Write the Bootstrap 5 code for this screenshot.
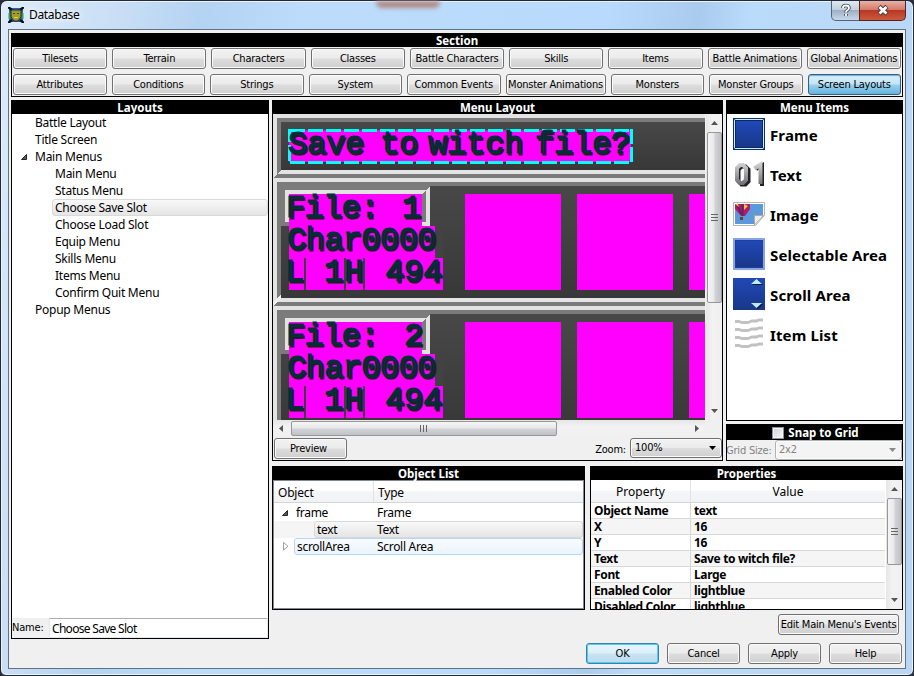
<!DOCTYPE html>
<html lang="en">
<head>
<meta charset="utf-8">
<title>Database</title>
<link href="https://cdn.jsdelivr.net/npm/bootstrap@5.3.0/dist/css/bootstrap.min.css" rel="stylesheet">
<style>
*{box-sizing:border-box}
body{margin:0;width:914px;height:676px;overflow:hidden;background:#2a2c38;font-family:"DejaVu Sans Condensed","DejaVu Sans",sans-serif;font-stretch:condensed;font-size:11px;line-height:14px;color:#000;letter-spacing:-.2px}
.win{width:914px;height:676px;border:1px solid #23283a;border-radius:7px 7px 6px 6px;padding:0 7px 7px;background:linear-gradient(100deg,#dcebf9 0,#c9def5 120px,#b4d3f2 200px,#bddcfb 300px,#b9dafc 600px,#a9cbed 690px,#bbdbfb 740px,#b9d6f2 100%);box-shadow:inset 0 0 0 1px #e9f4fd}
.titlebar{height:28px;font-family:"Noto Sans",sans-serif;font-size:12px}
.titlebar .cap{margin-left:5px;letter-spacing:-.35px;text-shadow:0 0 5px #fff,0 0 8px #fff;padding-top:3px;margin-top:4px}
.smudge{width:64px;height:7px;background:#b18c86;filter:blur(2px);border-radius:0 0 6px 6px;margin-left:297px}
.appicon{margin-top:6px}
.ctl{height:20px;border:1px solid #56647a;border-top:0}
.ctl.q{width:29px;border-radius:0 0 0 5px;background:linear-gradient(#e0e9f2,#c3cfdd 45%,#9fb0c5 50%,#c8d8e8)}
.ctl.x{width:47px;margin-left:-1px;border-color:#5c2022;border-radius:0 0 5px 0;background:linear-gradient(#e8b1a4,#d47c6b 45%,#b93823 50%,#cb5a3d)}
.client{height:640px;background:#f0f0f0;border:1px solid #5f7385;padding:3px 2px 0}
.panel{border:1px solid #000;background:#f0f0f0;overflow:hidden}
.ph{background:#000;color:#fff;font-weight:bold;text-align:center;height:14px;line-height:16px;margin:-1px -1px 0;font-family:"Noto Sans",sans-serif;font-size:11.5px;letter-spacing:0;flex:none}
.wbtn{height:21px;border:1px solid #707070;border-radius:3px;box-shadow:inset 0 0 0 1px #fbfbfb;background:linear-gradient(#f2f2f2,#ebebeb 48%,#dddddd 52%,#cfcfcf);font-size:11px;line-height:20px;padding:0;color:#000;text-align:center;white-space:nowrap;letter-spacing:-.22px}
.wbtn.sel{border-color:#2c628b;background:linear-gradient(#d8eefa,#c4e5f6 48%,#98d1ef 52%,#68b3db);box-shadow:inset 0 1px 1px #7fa9c0}
.wbtn.def{border-color:#3c7fb1;box-shadow:inset 0 0 0 1px #48d0f6;background:linear-gradient(#eaf5fb,#dceff9 48%,#c8e3f2 52%,#bcdcee)}
.sect{height:64px;padding:0 1px}
.sect .ph{margin:-1px -2px 1px}
.w100p{flex:0 0 100px}
.tree{font-family:"Noto Sans",sans-serif;font-size:12px;letter-spacing:-.25px}
.tree .it{height:17px;line-height:18px;padding-left:23px;white-space:nowrap}
.tree .it.top{padding-left:8px}
.tree .it.top span{padding-left:7px}
.tree .it.sub{margin-left:40px;padding-left:3px}
.picked{border:1px solid #d9d9d9;border-radius:3px;background:linear-gradient(#f8f8f8,#e5e5e5)}
.tree .it.sub.picked{padding-left:2px;line-height:16px}
.arrow{width:8px;height:8px;display:block}
.c-left{width:258px;height:539px}
.c-mid{width:451px;height:361px}
.c-right{width:177px}
.namebox{height:20px;border:1px solid #e3e9ef;border-top-color:#abadb3;background:#fff;font-size:12px;line-height:20px;padding-left:2px;margin-left:5px;width:219px;font-family:"Noto Sans",sans-serif;letter-spacing:-.7px}
.vbar{width:16px;background:linear-gradient(90deg,#e6e6e6,#f2f2f2 40%,#f0f0f0)}
.vth{border:1px solid #979797;border-radius:2px;background:linear-gradient(90deg,#f5f5f5,#e9e9eb 45%,#d2d3d6 55%,#c0c1c5);width:15px}
.hbar{height:17px;background:linear-gradient(#e6e6e6,#f2f2f2 40%,#f0f0f0)}
.hth{border:1px solid #979797;border-radius:2px;background:linear-gradient(#f5f5f5,#e9e9eb 45%,#d2d3d6 55%,#c0c1c5);height:15px;width:266px}
.mi{height:40px;font-family:"Noto Sans",sans-serif;font-weight:bold;font-size:15px;line-height:34px;padding-left:6px;white-space:nowrap;letter-spacing:.12px}
.mi svg{margin-right:5px;flex:none}
.combo{border:1px solid #707070;border-radius:3px;box-shadow:inset 0 0 0 1px #fbfbfb;background:linear-gradient(#f2f2f2,#ebebeb 48%,#dddddd 52%,#cfcfcf);height:20px;line-height:18px}
.combo.off{background:#f4f4f4;border-color:#adb2b5;color:#838383}
.chk{width:12px;height:12px;border:1px solid #8e8f8f;background:linear-gradient(135deg,#cfd3d8,#f6f6f6);box-shadow:inset 0 0 0 1px #f4f4f4}
.lower{height:144px}
.hd{background:linear-gradient(#fff 45%,#f5f6f8 50%,#f1f2f4);border-bottom:1px solid #d5d5d5;font-family:"Noto Sans",sans-serif;font-size:12px;letter-spacing:-.2px}
.col1{border-right:1px solid #e0e3e6}
.ol .r{height:17px;line-height:16px;font-family:"Noto Sans",sans-serif;font-size:12px;letter-spacing:-.3px}
.hover{border:1px solid #b8d6fb;border-radius:3px;background:linear-gradient(#fafcff,#eaf3fd)}
.pr{height:16px;border-bottom:1px solid #d8d8d8;font-family:"Noto Sans",sans-serif;font-weight:bold;font-size:12px;line-height:16px;background:#fff;letter-spacing:-.35px;flex:none;white-space:nowrap}
.pr:nth-child(odd){background:#f5f5f5}
.pr div:first-child{width:100px;border-right:1px solid #d8d8d8;padding-left:3px}
.pr div:last-child{padding-left:3px}
.w73{width:73px}
</style>
<script src="https://cdn.jsdelivr.net/npm/bootstrap@5.3.0/dist/js/bootstrap.bundle.min.js"></script>
</head>
<body>
<svg width="0" height="0" class="position-absolute">
<defs>
<linearGradient id="dk" x1="0" y1="0" x2="0" y2="1"><stop offset="0" stop-color="#484848"/><stop offset="1" stop-color="#383838"/></linearGradient>
<linearGradient id="bl" x1="0" y1="0" x2="0" y2="1"><stop offset="0" stop-color="#2148b8"/><stop offset="1" stop-color="#183888"/></linearGradient>
<linearGradient id="sv" gradientUnits="userSpaceOnUse" x1="0" y1="5" x2="0" y2="28"><stop offset="0" stop-color="#d2d2d6"/><stop offset="1" stop-color="#6a6a6c"/></linearGradient>
<symbol id="open" viewBox="0 0 8 8"><path d="M6.500 1.500v5h-5z" fill="#595959" stroke="#262626"/></symbol>
<symbol id="up" viewBox="0 0 7 4"><path d="M3.5 0 7 4H0z" fill="#555"/></symbol>
<symbol id="dn" viewBox="0 0 7 4"><path d="M3.5 4 7 0H0z" fill="#555"/></symbol>
<g id="slot">
<path d="M0 0h440v4H4v116l-4 4z" fill="#e3e3e3"/><path d="M4 4h436v4H8v108l-4 4z" fill="#7b7b7b"/>
<rect x="8" y="8" width="424" height="112" fill="url(#dk)"/>
<path d="M8 120h424v4H4z" fill="#e3e3e3"/><path d="M4 124h428v4H0z" fill="#7b7b7b"/>
<path d="M8 8h149l-8 8H16v24l-8 8z" fill="#7b7b7b"/>
<path d="M12 12h141l-4 4H16v24l-4 4z" fill="#e3e3e3"/>
<path d="M8 48l4-4h4v4z" fill="#7b7b7b"/><path d="M12 44l4-4v4z" fill="#e3e3e3"/>
<path d="M149 16l8-8v40h-8z" fill="#e3e3e3"/><path d="M149 16l4-4v32h-4z" fill="#7b7b7b"/>
<path d="M16 16h133v32h13v32h8v32H16z" fill="#f0f"/>
<path d="M162 48h8v32h-8z" fill="#424242"/>
<path d="M192 16h96v96h-96zM304 16h96v96h-96zM416 16h16v96h-16z" fill="#f0f"/>
<path d="M31 80h2v32h-2zM71 80h2v32h-2zM90 80h2v32h-2z" fill="#3e3e3e"/>
</g>
</defs>
</svg>
<div class="win">
 <div class="titlebar d-flex align-items-start">
  <svg width="16" height="16" viewBox="0 0 16 16" class="appicon"><rect x="1" y="1" width="14" height="14" fill="#1d63c4"/><path d="M0 0l4 3M16 0l-4 3M0 16l4-3M16 16l-4-3" stroke="#111" stroke-width="2.500"/><path d="M1.500 6v6M14.500 6v6" stroke="#2b9b62" stroke-width="2"/><path d="M3 3h10v7l-3 4H6l-3-4z" fill="#a39c2c" stroke="#2c2c14"/><path d="M5 6.500h2M9 6.500h2" stroke="#4c4718"/><path d="M6 10.500h4" stroke="#e8d23a"/></svg>
  <span class="cap">Database</span>
  <div class="smudge"></div>
  <div class="ctl q ms-auto d-flex justify-content-center"><svg width="12" height="18" viewBox="0 0 12 18"><path d="M3 7V6.500q0-2 3-2t3 2.500q0 1.500-2 2.500-1 .5-1 2M6 13v2" fill="none" stroke="#454c58" stroke-width="3.600"/><path d="M3 7V6.500q0-2 3-2t3 2.500q0 1.500-2 2.500-1 .5-1 2M6 13v2" fill="none" stroke="#fff" stroke-width="1.800"/></svg></div>
  <div class="ctl x d-flex justify-content-center"><svg width="14" height="18" viewBox="0 0 14 18"><path d="M3 5.500l8 7.500M11 5.500L3 13" stroke="#50393b" stroke-width="4.600"/><path d="M3.500 6l7 6.500M10.500 6l-7 6.500" stroke="#fff" stroke-width="2.800"/></svg></div>
 </div>
 <div class="client">
  <div class="panel sect">
   <div class="ph">Section</div>
   <div class="d-flex" style="gap:5px">
    <div class="wbtn col">Tilesets</div><div class="wbtn col">Terrain</div><div class="wbtn col">Characters</div><div class="wbtn col">Classes</div><div class="wbtn col">Battle Characters</div><div class="wbtn col">Skills</div><div class="wbtn col">Items</div><div class="wbtn col">Battle Animations</div><div class="wbtn col">Global Animations</div>
   </div>
   <div class="d-flex" style="gap:5px;margin-top:5px">
    <div class="wbtn col">Attributes</div><div class="wbtn col">Conditions</div><div class="wbtn col">Strings</div><div class="wbtn col">System</div><div class="wbtn col">Common Events</div><div class="wbtn w100p">Monster Animations</div><div class="wbtn col">Monsters</div><div class="wbtn col">Monster Groups</div><div class="wbtn col sel">Screen Layouts</div>
   </div>
  </div>
  <div class="d-flex" style="gap:3px;margin-top:3px">
   <div class="panel c-left d-flex flex-column">
    <div class="ph">Layouts</div>
    <div class="tree bg-white flex-grow-1">
     <div class="it">Battle Layout</div><div class="it">Title Screen</div>
     <div class="it top d-flex align-items-center"><svg class="arrow"><use href="#open"/></svg><span>Main Menus</span></div>
     <div class="it sub">Main Menu</div><div class="it sub">Status Menu</div><div class="it sub picked">Choose Save Slot</div><div class="it sub">Choose Load Slot</div><div class="it sub">Equip Menu</div><div class="it sub">Skills Menu</div><div class="it sub">Items Menu</div><div class="it sub">Confirm Quit Menu</div>
     <div class="it">Popup Menus</div>
    </div>
    <div class="d-flex align-items-center"><span style="width:32px">Name:</span><div class="namebox">Choose Save Slot</div></div>
   </div>
   <div class="d-flex flex-column">
    <div class="d-flex" style="gap:3px">
     <div class="panel c-mid">
      <div class="ph">Menu Layout</div>
      <div class="d-flex" style="height:306px">
       <svg width="432" height="306" viewBox="0 0 432 306" shape-rendering="crispEdges">
        <path d="M0 0h432v4H4v56l-4 4z" fill="#e3e3e3"/><path d="M4 4h428v4H8v48l-4 4z" fill="#7b7b7b"/>
        <rect x="8" y="8" width="424" height="48" fill="url(#dk)"/>
        <path d="M8 56h424v4H4z" fill="#e3e3e3"/><path d="M4 60h428v4H0z" fill="#7b7b7b"/>
        <rect x="16" y="16" width="342" height="32" fill="#f0f"/>
        <path d="M17 16.500H359M17 48.500H359" stroke="#0ff" stroke-width="3" stroke-dasharray="15.300 2.700" fill="none"/>
        <path d="M16.500 15v13m0 3v16M358.500 15v15m0 3v15" stroke="#0ff" stroke-width="3"/>
        <use href="#slot" y="64"/><use href="#slot" y="192"/>
        <g font-family="Liberation Mono,monospace" font-size="32" shape-rendering="auto" style="text-shadow:1.500px 1.500px 0 #202020" fill="#003040" stroke="#003040" stroke-width="1.200">
         <text y="39"><tspan x="15">Save</tspan><tspan x="107">to</tspan><tspan x="155">witch</tspan><tspan x="262">file?</tspan></text>
         <text y="103"><tspan x="13" textLength="93">File:</tspan><tspan x="129">1</tspan></text>
         <text y="135" x="14" textLength="149">Char0000</text>
         <text y="167"><tspan x="12">L</tspan><tspan x="51">1</tspan><tspan x="71">H</tspan><tspan x="112">494</tspan></text>
         <text y="231"><tspan x="13" textLength="93">File:</tspan><tspan x="131">2</tspan></text>
         <text y="263" x="14" textLength="149">Char0000</text>
         <text y="295"><tspan x="12">L</tspan><tspan x="51">1</tspan><tspan x="71">H</tspan><tspan x="112">494</tspan></text>
        </g>
       </svg>
       <div class="vbar d-flex flex-column align-items-center ms-auto" style="padding:7px 0">
        <svg width="7" height="4" class="flex-shrink-0"><use href="#up"/></svg>
        <div class="vth d-flex align-items-center justify-content-center flex-shrink-0" style="height:171px;margin-top:7px"><svg width="7" height="8"><path d="M0 .5h7M0 3.500h7M0 6.500h7" stroke="#666"/></svg></div>
        <svg width="7" height="4" class="mt-auto flex-shrink-0"><use href="#dn"/></svg>
       </div>
      </div>
      <div class="hbar d-flex align-items-center" style="width:432px;padding:0 6px">
       <svg width="4" height="7" viewBox="0 0 4 7"><path d="M4 0v7L0 3.500z" fill="#555"/></svg>
       <div class="hth d-flex align-items-center justify-content-center" style="margin-left:8px"><svg width="8" height="7"><path d="M.5 0v7M3.500 0v7M6.500 0v7" stroke="#666"/></svg></div>
       <svg width="4" height="7" viewBox="0 0 4 7" class="ms-auto"><path d="M0 0v7L4 3.500z" fill="#555"/></svg>
      </div>
      <div class="d-flex" style="padding:1px 0 0 1px">
       <div class="wbtn pe-1" style="width:73px">Preview</div>
       <span class="ms-auto" style="margin-right:4px;padding-top:5px">Zoom:</span>
       <div class="combo d-flex justify-content-between align-items-center" style="width:92px;padding:0 5px 0 4px"><span>100%</span><svg width="7" height="4"><path d="M0 0h7L3.500 4z"/></svg></div>
      </div>
     </div>
     <div class="c-right d-flex flex-column">
      <div class="panel bg-white" style="height:321px">
       <div class="ph">Menu Items</div>
       <div style="padding-top:4px">
        <div class="mi d-flex"><svg width="32" height="32"><rect width="32" height="32" fill="#10306c"/><rect x="1" y="1" width="30" height="30" rx="2" fill="#c8f0ff"/><rect x="2.500" y="2.500" width="27" height="27" fill="url(#bl)" stroke="#10285c"/></svg>Frame</div>
        <div class="mi d-flex"><svg width="32" height="32"><g fill="none" stroke-width="4"><path d="M7 7h4l3 3v12l-3 3H7l-3-3V10z" stroke="#222" transform="translate(1.500 1.500)"/><path d="M7 7h3l3 3v12l-3 3H7l-3-3V10z" stroke="url(#sv)"/><path d="M23 11l6-3.500V28" stroke="#222"/><path d="M21.500 10.500l6-4V26" stroke="url(#sv)"/></g></svg>Text</div>
        <div class="mi d-flex"><svg width="32" height="32"><path d="M.5 4.500h31v13l-9 10H.5z" fill="#fff" stroke="#b5b5b5"/><path d="M2 6h28v11h-8v9H2z" fill="#5c98dc"/><path d="M2 6h15v5l-5 7H8l-6-7z" fill="#b31b66"/><path d="M4 6l4 10M9.500 6v12" stroke="#602468" stroke-width="2"/><path d="M11 6l4 2-4 4zM2 6h3l1 3z" fill="#edc63a"/><path d="M7 19h3v3H7z" fill="#654526"/><path d="M21.500 27v-9.500h9z" fill="#ececec" stroke="#aaa"/></svg>Image</div>
        <div class="mi d-flex"><svg width="32" height="32"><rect width="32" height="32" fill="#88a4e0"/><rect x="2.500" y="2.500" width="27" height="27" fill="url(#bl)" stroke="#2040a0"/></svg>Selectable Area</div>
        <div class="mi d-flex"><svg width="32" height="32"><rect width="32" height="32" fill="url(#bl)"/><path d="M19 7h11l-5-5zM19 26h11l-5 5z" fill="#081838"/><path d="M18 6h11l-5.500-5zM18 25h11l-5.500 5z" fill="#b8ecff"/></svg>Scroll Area</div>
        <div class="mi d-flex"><svg width="32" height="32"><path id="wv" d="M2 3.500h4l3 1h6l4-1.500h4l3-1h4" fill="none" stroke="#c2c2c2" stroke-width="2.800"/><use href="#wv" y="8"/><use href="#wv" y="16"/><use href="#wv" y="24"/></svg>Item List</div>
       </div>
      </div>
      <div class="panel mt-auto" style="height:37px">
       <div class="ph d-flex justify-content-center align-items-center" style="height:16px;padding:2px 0 0 2px"><span class="chk" style="margin-right:4px"></span>Snap to Grid</div>
       <div class="d-flex" style="color:#838383"><span style="width:48px;padding-top:4px;white-space:nowrap;margin-left:-1px">Grid Size:</span><div class="combo off flex-grow-1 d-flex justify-content-between align-items-center" style="padding:0 5px 0 3px;margin-left:1px"><span>2x2</span><svg width="7" height="4"><path d="M0 0h7L3.500 4z" fill="#888"/></svg></div></div>
      </div>
     </div>
    </div>
    <div class="d-flex" style="gap:5px;margin-top:5px">
     <div class="panel lower bg-white" style="width:313px">
      <div class="ph">Object List</div>
      <div class="ol" style="border:1px solid #828790;height:129px">
       <div class="hd d-flex" style="height:22px;line-height:24px"><div class="col1" style="width:100px;padding-left:4px">Object</div><div style="padding-left:4px">Type</div></div>
       <div class="r d-flex align-items-center" style="padding-left:7px;margin-top:1px"><svg class="arrow"><use href="#open"/></svg><span style="width:88px;padding-left:7px">frame</span><span>Frame</span></div>
       <div class="r d-flex" style="background:#f5f5f5;padding-left:40px"><div class="picked flex-grow-1 d-flex" style="line-height:15px"><span style="width:62px;padding-left:2px">text</span><span>Text</span></div></div>
       <div class="r d-flex align-items-center" style="padding-left:9px"><svg width="6" height="9"><path d="M.5.5v7.500L5 4.300z" fill="#fff" stroke="#a0a0a0"/></svg><div class="hover flex-grow-1 d-flex" style="margin-left:5px;line-height:15px;height:17px"><span style="width:82px;padding-left:2px">scrollArea</span><span>Scroll Area</span></div></div>
      </div>
     </div>
     <div class="panel lower bg-white" style="width:313px">
      <div class="ph">Properties</div>
      <div class="d-flex" style="height:129px">
       <div class="d-flex flex-column overflow-hidden" style="width:294px">
        <div class="hd d-flex text-center flex-shrink-0" style="height:23px;line-height:24px;letter-spacing:0"><div class="col1" style="width:100px">Property</div><div class="flex-grow-1">Value</div></div>
        <div class="pr d-flex"><div>Object Name</div><div>text</div></div>
        <div class="pr d-flex"><div>X</div><div>16</div></div>
        <div class="pr d-flex"><div>Y</div><div>16</div></div>
        <div class="pr d-flex"><div>Text</div><div>Save to witch file?</div></div>
        <div class="pr d-flex"><div>Font</div><div>Large</div></div>
        <div class="pr d-flex"><div>Enabled Color</div><div>lightblue</div></div>
        <div class="pr d-flex"><div>Disabled Color</div><div>lightblue</div></div>
       </div>
       <div class="vbar d-flex flex-column align-items-center ms-auto" style="padding:7px 0">
        <svg width="7" height="4" class="flex-shrink-0"><use href="#up"/></svg>
        <div class="vth d-flex align-items-center justify-content-center flex-shrink-0" style="height:67px;margin-top:7px"><svg width="7" height="8"><path d="M0 .5h7M0 3.500h7M0 6.500h7" stroke="#666"/></svg></div>
        <svg width="7" height="4" class="mt-auto flex-shrink-0"><use href="#dn"/></svg>
       </div>
      </div>
     </div>
    </div>
    <div class="d-flex justify-content-end" style="margin-top:4px;padding-right:4px"><div class="wbtn" style="width:121px">Edit Main Menu's Events</div></div>
    <div class="d-flex justify-content-end" style="margin-top:8px;gap:8px;padding-right:1px"><div class="wbtn def w73">OK</div><div class="wbtn w73">Cancel</div><div class="wbtn w73">Apply</div><div class="wbtn w73">Help</div></div>
   </div>
  </div>
 </div>
</div>
</body>
</html>
